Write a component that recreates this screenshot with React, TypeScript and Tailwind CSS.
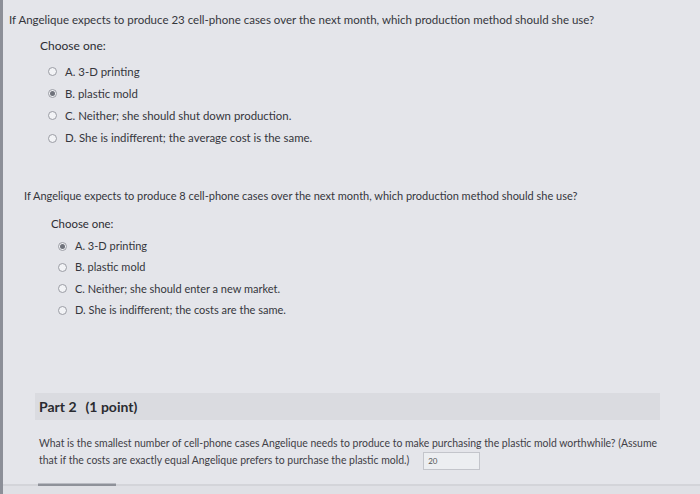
import React from "react";

type Opt = { label: string; checked?: boolean };

function Radio({ checked }: { checked?: boolean }) {
  return (
    <span className="flex h-[9px] w-[9px] shrink-0 items-center justify-center rounded-full border border-[#9a9ca4] bg-[#f2f3f6]">
      {checked && <span className="h-[5px] w-[5px] rounded-full bg-[#6f727b]" />}
    </span>
  );
}

function Options({ options, row }: { options: Opt[]; row: string }) {
  return (
    <ul className="flex flex-col">
      {options.map((o) => (
        <li key={o.label} className={`flex items-center gap-[8px] whitespace-nowrap ${row}`}>
          <Radio checked={o.checked} />
          <span>{o.label}</span>
        </li>
      ))}
    </ul>
  );
}

export default function App() {
  return (
    <div
      className="relative h-[494px] w-[700px] overflow-hidden border-l-[3px] border-[#8c8f98] bg-[#e4e5ea] text-[#35363c]"
      style={{ fontFamily: "Lato, 'Open Sans', sans-serif" }}
    >
      {/* Question 1 */}
      <div className="pl-[6px] pt-[12px]">
        <p className="whitespace-nowrap text-[11.5px] leading-[16px]">
          If Angelique expects to produce 23 cell-phone cases over the next month, which production method should she use?
        </p>
        <div className="ml-[31px]">
          <p className="mt-[10px] text-[12px] leading-[16px] text-[#2c2d33]">Choose one:</p>
          <div className="ml-[8px] mt-[6px]">
            <Options
              row="h-[22.3px] text-[11.4px]"
              options={[
                { label: "A. 3-D printing" },
                { label: "B. plastic mold", checked: true },
                { label: "C. Neither; she should shut down production." },
                { label: "D. She is indifferent; the average cost is the same." },
              ]}
            />
          </div>
        </div>
      </div>

      {/* Question 2 */}
      <div className="pl-[21px] pt-[39px]">
        <p className="whitespace-nowrap text-[11px] leading-[16px]">
          If Angelique expects to produce 8 cell-phone cases over the next month, which production method should she use?
        </p>
        <div className="ml-[27px]">
          <p className="mt-[12px] text-[11.4px] leading-[16px] text-[#2c2d33]">Choose one:</p>
          <div className="ml-[7px] mt-[3.5px]">
            <Options
              row="h-[21.3px] text-[11px]"
              options={[
                { label: "A. 3-D printing", checked: true },
                { label: "B. plastic mold" },
                { label: "C. Neither; she should enter a new market." },
                { label: "D. She is indifferent; the costs are the same." },
              ]}
            />
          </div>
        </div>
      </div>

      {/* Part 2 */}
      <div className="ml-[32px] mr-[40px] mt-[72px]">
        <div className="flex h-[27px] items-center bg-[#dadbe0] pl-[4px] text-[14px] font-bold text-[#2a2b30]">
          Part 2 <span className="ml-[9px]">(1 point)</span>
        </div>
        <div className="mt-[14px] pl-[4px] text-[10.45px] text-[#3f4046]">
          <p className="whitespace-nowrap leading-[18px]">
            What is the smallest number of cell-phone cases Angelique needs to produce to make purchasing the plastic mold worthwhile? (Assume
          </p>
          <p className="flex h-[18px] items-center whitespace-nowrap">
            that if the costs are exactly equal Angelique prefers to purchase the plastic mold.)
            <span className="ml-[14px] flex h-[18px] w-[57px] items-center border border-[#c3c5cb] bg-[#eceef1] pl-[4px] text-[8px] text-[#555]">
              20
            </span>
          </p>
        </div>
      </div>

      <div className="absolute bottom-[8px] left-0 right-0 h-[2px] bg-[#d3d4d9]">
        <div className="ml-[35px] h-[3px] w-[78px] -translate-y-[0.5px] bg-[#8e9199]" />
      </div>
      <div className="absolute bottom-0 left-0 right-0 h-[8px] bg-[#dfe0e5]" />
    </div>
  );
}
